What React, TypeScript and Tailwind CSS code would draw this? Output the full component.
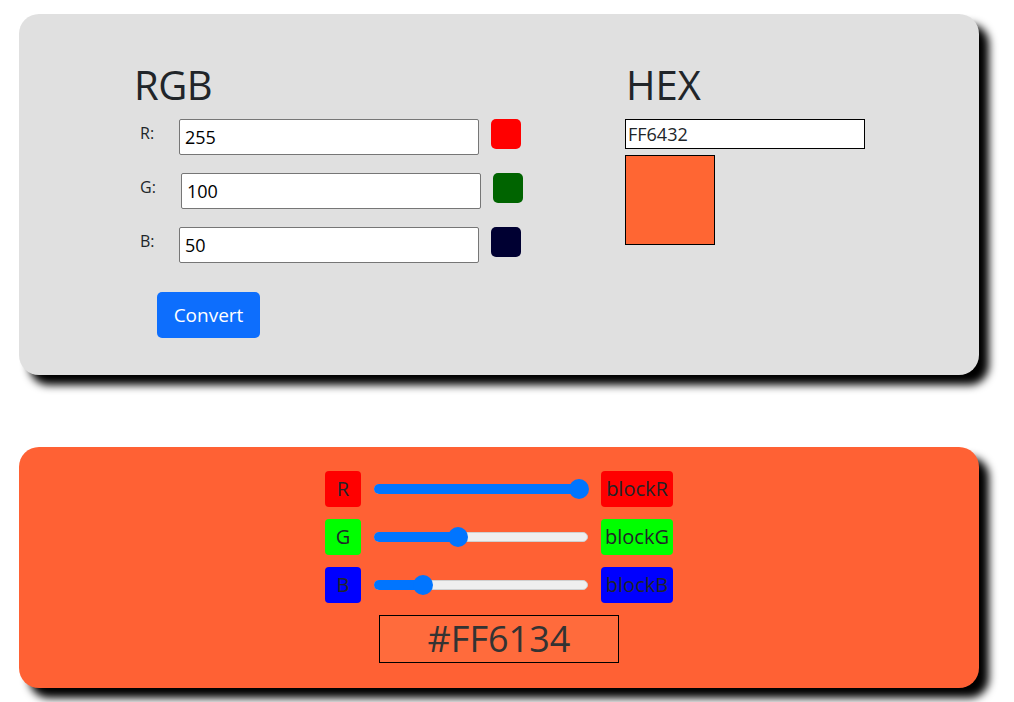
const font = { fontFamily: '"Open Sans", "Noto Sans", sans-serif' };

interface RowProps {
  label: string;
  value: string;
  swatch: string;
  labelW: string;
}

function RgbRow({ label, value, swatch, labelW }: RowProps) {
  return (
    <div className="flex items-start">
      <span className={`${labelW} pl-[6px] pt-[2px] text-[16px] leading-[24px] text-[#212529]`}>{label}</span>
      <div className="w-[300px] h-[36px] border border-[#767676] rounded-[2px] bg-white flex items-center px-[5px] text-[18px] text-black">
        {value}
      </div>
      <div className={`ml-[12px] w-[30px] h-[30px] rounded-[5px] ${swatch}`} />
    </div>
  );
}

interface SliderProps {
  name: string;
  block: string;
  value: number;
  bg: string;
}

function SliderRow({ name, block, value, bg }: SliderProps) {
  const pct = value / 255;
  const center = 9.5 + 195 * pct;
  return (
    <div className="flex items-center gap-[13px]">
      <div className={`w-[36px] h-[36px] rounded-[4px] ${bg} flex items-center justify-center text-[20px] text-[#212529]`}>
        {name}
      </div>
      <div className="relative w-[214px] h-[20px] flex items-center">
        <div className="w-full h-[10px] rounded-full bg-[#efefef] border border-[#d0d0d0]" />
        <div
          className="absolute left-0 h-[10px] rounded-full bg-[#0075ff]"
          style={{ width: center }}
        />
        <div
          className="absolute w-[20px] h-[20px] rounded-full bg-[#0075ff]"
          style={{ left: center - 10 }}
        />
      </div>
      <div className={`w-[72px] h-[36px] rounded-[4px] ${bg} flex items-center justify-center text-[20px] text-[#212529]`}>
        {block}
      </div>
    </div>
  );
}

export default function App() {
  return (
    <div className="w-[1014px] h-[702px] bg-white pt-[14px] pl-[19px]" style={font}>
      <div className="w-[960px] h-[361px] bg-[#e0e0e0] rounded-[20px] shadow-[10px_10px_9px_#000] pl-[115px] pt-[47px] flex">
        <div className="w-[491px] flex flex-col">
          <h1 className="text-[40px] leading-[48px] text-[#212529] mb-[10px] tracking-[-0.5px]">RGB</h1>
          <div className="flex flex-col gap-[18px]">
            <RgbRow label="R:" value="255" swatch="bg-[#ff0000]" labelW="w-[45px]" />
            <RgbRow label="G:" value="100" swatch="bg-[#006400]" labelW="w-[47px]" />
            <RgbRow label="B:" value="50" swatch="bg-[#000032]" labelW="w-[45px]" />
          </div>
          <button className="mt-[29px] ml-[23px] w-[103px] h-[46px] bg-[#0d6efd] rounded-[5px] text-white text-[19px]">
            Convert
          </button>
        </div>
        <div className="flex flex-col">
          <h1 className="text-[40px] leading-[48px] text-[#212529] mb-[10px] pl-[1px]">HEX</h1>
          <div className="w-[240px] h-[30px] border border-black bg-white flex items-center px-[2px] text-[18px] text-[#212529]">
            FF6432
          </div>
          <div className="mt-[6px] w-[90px] h-[90px] border border-black bg-[#ff6633]" />
        </div>
      </div>

      <div className="mt-[72px] w-[960px] h-[241px] bg-[#ff6134] rounded-[20px] shadow-[10px_10px_9px_#000] pt-[24px] flex flex-col items-center gap-[12px]">
        <SliderRow name="R" block="blockR" value={255} bg="bg-[#ff0000]" />
        <SliderRow name="G" block="blockG" value={97} bg="bg-[#00ff00]" />
        <SliderRow name="B" block="blockB" value={52} bg="bg-[#0000ff]" />
        <div className="w-[240px] h-[48px] border border-black bg-[#ff6b3c] flex items-center justify-center text-[36px] text-[#333333]">
          #FF6134
        </div>
      </div>
    </div>
  );
}
